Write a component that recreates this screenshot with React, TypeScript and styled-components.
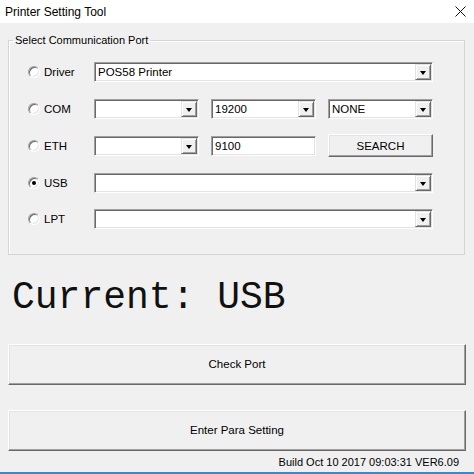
import React, { useState } from "react";
import styled, { createGlobalStyle } from "styled-components";

const GlobalStyle = createGlobalStyle`
  html, body {
    margin: 0;
    padding: 0;
    background: #f0f0f0;
  }
  body {
    font-family: "Liberation Sans", Arial, sans-serif;
    color: #000;
  }
`;

const Window = styled.div`
  width: 474px;
  height: 474px;
  display: flex;
  flex-direction: column;
  background: #f0f0f0;
  overflow: hidden;
`;

const TitleBar = styled.div`
  height: 23px;
  flex: 0 0 23px;
  background: #fff;
  display: flex;
  align-items: center;
  justify-content: space-between;
  padding: 0 8px 0 5px;
  font-size: 12px;
`;

const CloseIcon = () => (
  <svg width="11" height="11" viewBox="0 0 11 11">
    <path d="M0.5 0.5 L10.5 10.5 M10.5 0.5 L0.5 10.5" stroke="#111" strokeWidth="1" />
  </svg>
);

const Body = styled.div`
  flex: 1;
  display: flex;
  flex-direction: column;
  padding: 0 8px 0 8px;
`;

const GroupBox = styled.fieldset`
  margin: 10px 1px 0 0;
  padding: 7px 0 16px 19px;
  border: 1px solid #d5d5d5;
  box-shadow: inset 1px 1px 0 #fff;
  min-width: 0;
`;

const Legend = styled.legend`
  font-size: 11px;
  line-height: 14px;
  padding: 0 2px;
  margin-left: -15px;
`;

const Row = styled.div`
  height: 36.75px;
  display: grid;
  grid-template-columns: 54px repeat(3, 105px);
  column-gap: 12px;
  align-items: center;
`;

const RadioLabel = styled.label`
  display: flex;
  align-items: center;
  gap: 4px;
  font-size: 11.5px;
`;

const Radio = styled.span<{ $checked?: boolean }>`
  width: 12px;
  height: 12px;
  box-sizing: border-box;
  border-radius: 50%;
  background: #fff;
  border: 1px solid;
  border-color: #a0a0a0 #fff #fff #a0a0a0;
  box-shadow: inset 1px 1px 0 #696969, inset -1px -1px 0 #e3e3e3;
  display: flex;
  align-items: center;
  justify-content: center;

  &::after {
    content: "";
    width: 4px;
    height: 4px;
    border-radius: 50%;
    background: ${(p) => (p.$checked ? "#000" : "transparent")};
  }
`;

const Field = styled.div<{ $span?: number }>`
  grid-column: ${(p) => (p.$span ? `span ${p.$span}` : "auto")};
  height: 20px;
  box-sizing: border-box;
  background: #fff;
  border: 1px solid;
  border-color: #a0a0a0 #fff #fff #a0a0a0;
  box-shadow: inset 1px 1px 0 #696969, inset -1px -1px 0 #e3e3e3;
  display: flex;
  align-items: center;
  font-size: 11.5px;
  padding: 0 2px 0 3px;
`;

const FieldText = styled.span`
  flex: 1;
  white-space: nowrap;
  overflow: hidden;
`;

const DropButton = styled.span`
  width: 16px;
  height: 16px;
  box-sizing: border-box;
  margin-right: -1px;
  background: #f0f0f0;
  border: 1px solid;
  border-color: #e3e3e3 #696969 #696969 #e3e3e3;
  box-shadow: inset 1px 1px 0 #fff, inset -1px -1px 0 #a0a0a0;
  display: flex;
  align-items: center;
  justify-content: center;
  padding-top: 2px;

  &::after {
    content: "";
    border-left: 3.5px solid transparent;
    border-right: 3.5px solid transparent;
    border-top: 4px solid #000;
  }
`;

const PushButton = styled.button<{ $tall?: boolean }>`
  height: ${(p) => (p.$tall ? "41px" : "23px")};
  box-sizing: border-box;
  background: #f0f0f0;
  border: 1px solid;
  border-color: #fff #696969 #696969 #fff;
  box-shadow: inset -1px -1px 0 #a0a0a0, inset 1px 1px 0 #e3e3e3;
  font-family: "Liberation Sans", Arial, sans-serif;
  font-size: 11.5px;
  color: #000;
  padding: 0;
  border-radius: 0;
`;

const Current = styled.div`
  font-family: "Courier New", "Nimbus Mono PS", "FreeMono", "Liberation Mono", monospace;
  font-size: 38px;
  line-height: 44px;
  margin: 21px 0 0 4px;
  height: 44px;
  color: #111;
`;

const BigButtons = styled.div`
  display: flex;
  flex-direction: column;
  gap: 25px;
  margin: 24px 0 0 0;
`;

const Footer = styled.div`
  margin-top: auto;
  display: flex;
  justify-content: flex-end;
  padding: 0 7px 3px 0;
  font-size: 11px;
  line-height: 14px;
`;

const StatusLine = styled.div`
  height: 2px;
  flex: 0 0 2px;
  background: #2f8ad8;
`;

type Port = "Driver" | "COM" | "ETH" | "USB" | "LPT";

const Combo = ({ value = "", span }: { value?: string; span?: number }) => (
  <Field $span={span}>
    <FieldText>{value}</FieldText>
    <DropButton />
  </Field>
);

const PortRadio = ({ port, current, onPick }: { port: Port; current: Port; onPick: (p: Port) => void }) => (
  <RadioLabel onClick={() => onPick(port)}>
    <Radio $checked={current === port} />
    {port}
  </RadioLabel>
);

const App = () => {
  const [port, setPort] = useState<Port>("USB");

  return (
    <Window>
      <GlobalStyle />
      <TitleBar>
        <span>Printer Setting Tool</span>
        <CloseIcon />
      </TitleBar>
      <Body>
        <GroupBox>
          <Legend>Select Communication Port</Legend>
          <Row>
            <PortRadio port="Driver" current={port} onPick={setPort} />
            <Combo value="POS58 Printer" span={3} />
          </Row>
          <Row>
            <PortRadio port="COM" current={port} onPick={setPort} />
            <Combo />
            <Combo value="19200" />
            <Combo value="NONE" />
          </Row>
          <Row>
            <PortRadio port="ETH" current={port} onPick={setPort} />
            <Combo />
            <Field>
              <FieldText>9100</FieldText>
            </Field>
            <PushButton>SEARCH</PushButton>
          </Row>
          <Row>
            <PortRadio port="USB" current={port} onPick={setPort} />
            <Combo span={3} />
          </Row>
          <Row>
            <PortRadio port="LPT" current={port} onPick={setPort} />
            <Combo span={3} />
          </Row>
        </GroupBox>
        <Current>Current: {port}</Current>
        <BigButtons>
          <PushButton $tall>Check Port</PushButton>
          <PushButton $tall>Enter Para Setting</PushButton>
        </BigButtons>
        <Footer>Build Oct 10 2017 09:03:31 VER6.09</Footer>
      </Body>
      <StatusLine />
    </Window>
  );
};

export default App;
